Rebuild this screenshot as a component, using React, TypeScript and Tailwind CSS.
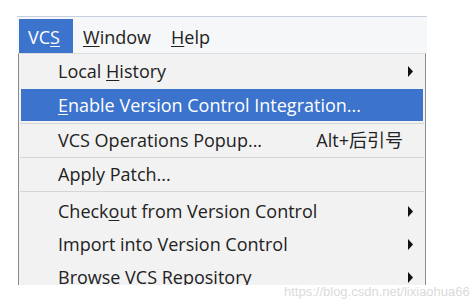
import React from 'react';

const font = { fontFamily: '"Open Sans", "Noto Sans", "Noto Sans CJK SC", sans-serif' };

function Arrow() {
  return (
    <svg width="5" height="11" viewBox="0 0 5 11" className="shrink-0">
      <path d="M0 0 L5 5.5 L0 11 Z" fill="#111" />
    </svg>
  );
}

function Row({
  children,
  active = false,
  arrow = false,
  shortcut,
  h = 'h-[33px]',
}: {
  children: React.ReactNode;
  active?: boolean;
  arrow?: boolean;
  shortcut?: string;
  h?: string;
}) {
  return (
    <div
      className={`${h} mx-[2px] flex items-center pl-[37px] ${
        active ? 'bg-[#3b73cd] text-white' : 'text-[#222]'
      }`}
    >
      <span className="flex-1 whitespace-nowrap">{children}</span>
      {shortcut && <span className="mr-[20px] whitespace-nowrap">{shortcut}</span>}
      {arrow && (
        <span className="mr-[10px] flex">
          <Arrow />
        </span>
      )}
    </div>
  );
}

const Sep = () => <div className="h-px bg-[#d6d6d6] mx-[1px]" />;

export default function App() {
  return (
    <div className="relative w-[474px] h-[305px] bg-white overflow-hidden text-[18px]" style={font}>
      <div className="ml-[17px] pt-[16px] w-[410px]">
        <div className="h-[37px] border-t border-[#c5d0dc] bg-[#f6f7f8] pt-[2px] flex text-[#222]">
          <div className="h-[34px] ml-[2px] w-[54px] bg-[#3b73cd] text-white flex items-center pl-[9px] pt-[2px]">
            VC<u className="underline-offset-2">S</u>
          </div>
          <div className="h-[34px] flex items-center pl-[10px] pr-[20px] pt-[2px]">
            <u className="underline-offset-2">W</u>indow
          </div>
          <div className="h-[34px] flex items-center pt-[2px]">
            <u className="underline-offset-2">H</u>elp
          </div>
        </div>
        <div className="ml-[1px] w-[408px] h-[232px] overflow-hidden border-x border-[#8a8a8a] border-t border-t-[#dcdcdc] bg-[#f2f2f2]">
          <Row arrow h="h-[34px]">
            Local <u className="underline-offset-2">H</u>istory
          </Row>
          <div className="h-px" />
          <Row active h="h-[32px]">
            <u className="underline-offset-2">E</u>nable Version Control Integration...
          </Row>
          <div className="h-[2px]" />
          <Sep />
          <Row shortcut="Alt+后引号">VCS Operations Popup...</Row>
          <Sep />
          <Row>Apply Patch...</Row>
          <Sep />
          <div className="h-[3px]" />
          <Row arrow>
            Check<u className="underline-offset-2">o</u>ut from Version Control
          </Row>
          <Row arrow>Import into Version Control</Row>
          <Row arrow>Browse VCS Repository</Row>
        </div>
      </div>
      <div
        className="absolute left-[284px] top-[282px] text-[13px] text-[#dadada] whitespace-nowrap"
        style={{ fontFamily: '"Liberation Sans", Arial, sans-serif' }}
      >
        https://blog.csdn.net/lixiaohua66
      </div>
    </div>
  );
}
